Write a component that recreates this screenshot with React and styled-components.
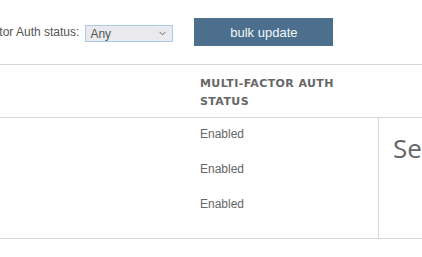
import React from 'react';
import styled, { createGlobalStyle } from 'styled-components';

const GlobalStyle = createGlobalStyle`
    html, body {
        margin: 0;
        padding: 0;
        background: #ffffff;
        overflow: hidden;
    }
`;

const Page = styled.div`
    width: 422px;
    overflow: hidden;
    font-family: 'Liberation Sans', Arial, sans-serif;
`;

const Toolbar = styled.div`
    display: flex;
    align-items: center;
    height: 64px;
    margin-left: -50px; /* the view is cropped: label starts off screen */
    box-sizing: border-box;
`;

const FilterLabel = styled.label`
    font-size: 12px;
    color: #555555;
    white-space: nowrap;
    margin-right: 6px;
`;

const StatusSelect = styled.div`
    display: flex;
    align-items: center;
    justify-content: space-between;
    width: 88px;
    height: 17px;
    box-sizing: border-box;
    padding: 0 6px 0 4px;
    background: #e9e9ee;
    border: 1px solid #a8cbe8;
    font-size: 12px;
    color: #555555;
    margin-top: 3px;
`;

const Chevron = styled.svg`
    width: 7px;
    height: 5px;
`;

const BulkButton = styled.button`
    margin-left: 21px;
    width: 139px;
    height: 28px;
    border: 0;
    background: #4b6f8d;
    color: #f4f7fa;
    font-family: 'Liberation Sans', Arial, sans-serif;
    font-size: 13px;
    padding: 0;
`;

const Table = styled.div`
    display: grid;
    grid-template-columns: 190px 188px 200px;
    width: 578px;
    border-top: 1px solid #d3d8dc;
    border-bottom: 1px solid #d3d8dc;
`;

const HeadCell = styled.div`
    height: 53px;
    box-sizing: border-box;
    padding: 10px 10px 0;
    font-family: 'DejaVu Sans', Verdana, sans-serif;
    font-weight: bold;
    font-size: 11px;
    line-height: 17.5px;
    letter-spacing: 0.4px;
    color: #666666;
    border-bottom: 1px solid #d3d8dc;
`;

const BodyCell = styled.div`
    height: 120px;
    box-sizing: border-box;
    padding: 9px 10px 0;
    display: flex;
    flex-direction: column;
    gap: 21px;
    border-left: ${p => (p.$divider ? '1px solid #d3d8dc' : '0')};
`;

const StatusLine = styled.div`
    font-size: 12px;
    line-height: 14px;
    color: #666666;
`;

const BigText = styled.div`
    font-family: 'Open Sans', 'DejaVu Sans', sans-serif;
    font-size: 26px;
    line-height: 34px;
    color: #666666;
    padding: 4px 0 0 4px;
    white-space: nowrap;
`;

const statuses = ['Enabled', 'Enabled', 'Enabled'];

const App = () => {
    return (
        <Page>
            <GlobalStyle />
            <Toolbar>
                <FilterLabel>Multi-Factor Auth status:</FilterLabel>
                <StatusSelect>
                    <span>Any</span>
                    <Chevron viewBox="0 0 7 5">
                        <path d="M0.5 0.8 L3.5 3.8 L6.5 0.8" stroke="#666" strokeWidth="1" fill="none" />
                    </Chevron>
                </StatusSelect>
                <BulkButton>bulk update</BulkButton>
            </Toolbar>
            <Table>
                <HeadCell />
                <HeadCell>
                    MULTI-FACTOR AUTH
                    <br />
                    STATUS
                </HeadCell>
                <HeadCell />
                <BodyCell />
                <BodyCell>
                    {statuses.map((s, i) => (
                        <StatusLine key={i}>{s}</StatusLine>
                    ))}
                </BodyCell>
                <BodyCell $divider>
                    <BigText>Send</BigText>
                </BodyCell>
            </Table>
        </Page>
    );
};

export default App;
